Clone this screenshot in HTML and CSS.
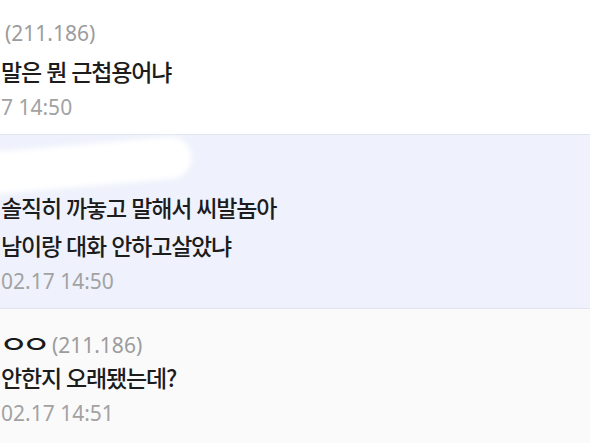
FILE: index.html
```html
<!DOCTYPE html>
<html lang="ko">
<head>
<meta charset="utf-8">
<link rel="stylesheet" href="styles.css">
</head>
<body>
<div class="thread">
  <div class="comment comment-first">
    <div class="head head-shift"><span class="ip">(211.186)</span></div>
    <p class="text">말은 뭔 근첩용어냐</p>
    <div class="date">7 14:50</div>
  </div>
  <div class="comment comment-hl">
    <div class="head head-hidden"></div>
    <div class="smudge"></div>
    <p class="text">솔직히 까놓고 말해서 씨발놈아</p>
    <p class="text">남이랑 대화 안하고살았냐</p>
    <div class="date">02.17 14:50</div>
  </div>
  <div class="comment comment-last">
    <div class="head"><span class="nick">ㅇㅇ</span><span class="ip">(211.186)</span></div>
    <p class="text">안한지 오래됐는데?</p>
    <div class="date">02.17 14:51</div>
  </div>
</div>
</body>
</html>
```

FILE: styles.css
```css
html, body {
  margin: 0;
  padding: 0;
  background: #ffffff;
}
body {
  width: 590px;
  height: 443px;
  overflow: hidden;
  font-family: "Noto Sans CJK KR", "Noto Sans", sans-serif;
}
.thread {
  padding-top: 3px;
}
.comment {
  position: relative;
  padding: 11px 0 10px 1px;
  border-bottom: 1px solid #e1e4ec;
}
.comment-first {
  background: #ffffff;
}
.comment-hl {
  background: #eff2fc;
}
.comment-last {
  background: #fafafb;
  border-bottom: none;
  height: 200px;
}
.head {
  display: flex;
  align-items: baseline;
  gap: 8px;
  height: 38px;
  line-height: 38px;
}
.head-shift {
  padding-left: 4px;
}
.head-hidden {
  height: 42px;
}
.nick {
  display: inline-block;
  font-family: "Noto Sans CJK KR", sans-serif;
  font-size: 32px;
  font-weight: 500;
  letter-spacing: -7px;
  margin-left: -2px;
  color: #1a1a1a;
  transform: scaleY(0.74) translateY(2px);
  transform-origin: 50% 70%;
}
.ip {
  font-family: "Noto Sans", sans-serif;
  font-size: 21px;
  color: #9c9c9c;
}
.text {
  margin: 0;
  font-family: "Noto Sans CJK KR", sans-serif;
  font-size: 23px;
  font-weight: 500;
  line-height: 38px;
  letter-spacing: -1.2px;
  color: #1c1c1c;
}
.date {
  font-family: "Noto Sans", sans-serif;
  font-size: 21px;
  line-height: 34px;
  color: #a2a2a2;
}
.smudge {
  position: absolute;
  left: -40px;
  top: 10px;
  width: 232px;
  height: 42px;
  border-radius: 21px;
  background: #ffffff;
  transform: rotate(-5deg);
  filter: blur(2.5px);
  z-index: 2;
}
```
